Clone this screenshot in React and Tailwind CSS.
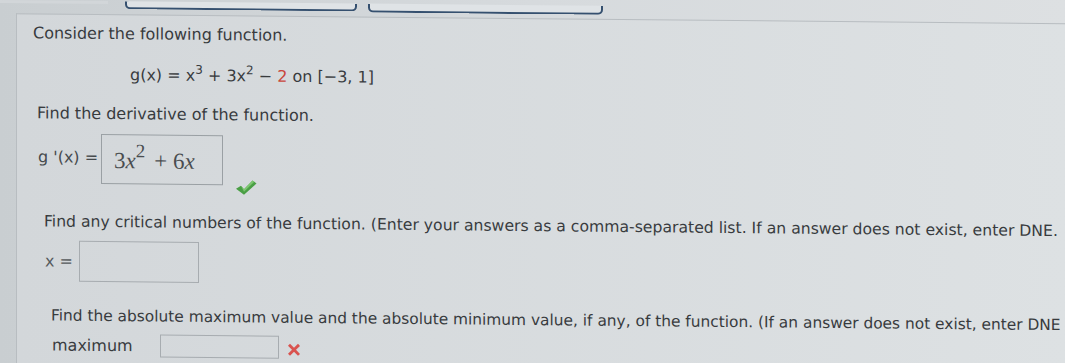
import React from "react";

const Check = () => (
  <svg width="22" height="16" viewBox="0 0 22 16" className="block">
    <path d="M1 9.5 L6 6.5 L9 10 L17.5 1 L21.5 4 L9 15.5 Z" fill="#4a9f45" />
    <path d="M6 6.5 L9 10 L17.5 1 L19.3 2.4 L9 12.3 Z" fill="#7cc66f" />
  </svg>
);

const Cross = () => (
  <svg width="16" height="16" viewBox="0 0 16 16" className="block">
    <path d="M2 4 L4 2 L8 6 L12 2 L14 4 L10 8 L14 12 L12 14 L8 10 L4 14 L2 12 L6 8 Z" fill="#d9534f" />
  </svg>
);

const TopTab = ({ className }) => (
  <div className={`border-x-2 border-b-2 border-[#35506f] rounded-b-[5px] bg-[#dfe3e6] ${className}`} />
);

export default function App() {
  return (
    <div className="w-[1065px] h-[363px] overflow-hidden bg-gradient-to-r from-[#c9ced1] via-[#d6dadd] to-[#dde0e2] font-['DejaVu_Sans',sans-serif] text-[#383b3e]">
      <div className="origin-top-left skew-y-[0.55deg]">
        {/* tabs peeking at the top */}
        <div className="flex items-start h-[13px]">
          <div className="w-[108px] h-[3px] bg-[#d2d6d9]" />
          <TopTab className="ml-[17px] w-[232px] h-[8px]" />
          <TopTab className="ml-[11px] w-[235px] h-[9px]" />
        </div>

        {/* question panel */}
        <div className="ml-[16px] h-[360px] border-l border-t border-[#b8bdc1] bg-gradient-to-r from-[#d3d7da] to-[#dde1e3] text-[16px] leading-[18px]">
          <div className="pt-[10px] pl-[16px]">Consider the following function.</div>

          <div className="mt-[23px] pl-[113px] whitespace-nowrap">
            g(x) = x<sup className="text-[12px] relative -top-[7px]">3</sup> + 3x
            <sup className="text-[12px] relative -top-[7px]">2</sup> − <span className="text-[#c9473c]">2</span> on [−3, 1]
          </div>

          <div className="mt-[21px] pl-[20px]">Find the derivative of the function.</div>

          <div className="mt-[11px] pl-[21px] flex items-start">
            <span className="mt-[15px] text-[#45494c] whitespace-nowrap">g '(x) =</span>
            <div className="ml-[3px] w-[122px] h-[50px] border border-[#9aa0a4] flex items-center pl-[12px] pt-[4px] font-['Liberation_Serif',serif] text-[23px] text-[#4a4d50] whitespace-nowrap">
              3<i>x</i>
              <sup className="text-[19px] relative -top-[10px]">2</sup>
              <span className="ml-[9px]">+ 6</span>
              <i>x</i>
            </div>
            <div className="ml-[12px] mt-[44px]">
              <Check />
            </div>
          </div>

          <div className="mt-[19px] pl-[27px] whitespace-nowrap text-[15.65px]">
            Find any critical numbers of the function. (Enter your answers as a comma-separated list. If an answer does not exist, enter DNE.
          </div>

          <div className="mt-[10px] pl-[28px] flex items-center">
            <span className="text-[#55595c] w-[34px]">x =</span>
            <div className="w-[120px] h-[41px] border border-[#a7acb0]" />
          </div>

          <div className="mt-[25px] pl-[34px] whitespace-nowrap text-[15.4px]">
            Find the absolute maximum value and the absolute minimum value, if any, of the function. (If an answer does not exist, enter DNE
          </div>

          <div className="mt-[9px] pl-[35px] flex items-center">
            <span className="w-[108px]">maximum</span>
            <div className="w-[119px] h-[23px] border border-[#a7acb0]" />
            <div className="ml-[7px] mt-[4px]">
              <Cross />
            </div>
          </div>
        </div>
      </div>
    </div>
  );
}
